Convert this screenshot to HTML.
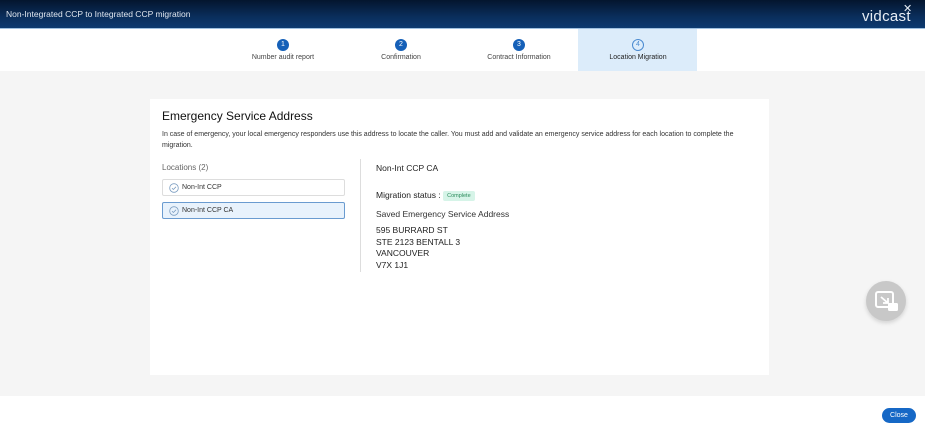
<!DOCTYPE html>
<html><head><style>
*{margin:0;padding:0;box-sizing:border-box}
body{width:925px;height:431px;overflow:hidden;font-family:"Liberation Sans",sans-serif;background:#fff;position:relative;color:#222}
.hdr{position:absolute;left:0;top:0;width:925px;height:28px;background:linear-gradient(180deg,#04152e 0%,#0a2e5c 60%,#0d3a70 100%);}
.hdr .t{position:absolute;left:6px;top:9px;font-size:8.5px;color:#dfe6ee}
.hdr .v{position:absolute;left:862px;top:8px;font-size:15px;color:#e8eef5;letter-spacing:.3px}
.hdr .x{position:absolute;left:903px;top:2px;font-size:11px;color:#e8eef5}
.steps{position:absolute;top:28px;left:0;width:925px;height:43px;background:#fff;border-top:1px solid #9fc0e0}
.act{position:absolute;left:578px;top:0;width:119px;height:43px;background:#dcecfa}
.st{position:absolute;top:10px;width:120px;margin-left:-60px;text-align:center;font-size:7px;color:#444}
.st .c{display:block;margin:0 auto 3px;width:12px;height:12px;border-radius:50%;background:#1560b8;color:#fff;font-size:7px;line-height:12px}
.st .c.o{background:transparent;border:1px solid #4a8ad0;color:#4a8ad0;line-height:10px}
.gray{position:absolute;top:71px;left:0;width:925px;height:325px;background:#f5f5f5}
.card{position:absolute;left:150px;top:99px;width:619px;height:276px;background:#fff}
.h{position:absolute;left:12px;top:10px;font-size:12px;color:#111}
.p{position:absolute;left:12px;top:31px;width:592px;font-size:7px;line-height:10.5px;color:#333}
.lh{position:absolute;left:12px;top:64px;font-size:8px;color:#666}
.li{position:absolute;left:12px;width:183px;height:17px;border:1px solid #ddd;border-radius:2px;font-size:7px;line-height:15px;padding-left:19px;color:#333}
.li.s{border-color:#6a9bd0;background:#e8f2fc}
.li svg{position:absolute;left:6px;top:3px}
.vl{position:absolute;left:210px;top:60px;width:1px;height:113px;background:#ddd}
.r{position:absolute;left:226px;color:#222}
.badge{display:inline-block;background:#d6f4e8;color:#2a8a5a;font-size:5.5px;padding:2px 4px;border-radius:2px;vertical-align:middle}
.fab{position:absolute;left:866px;top:281px;width:40px;height:40px;border-radius:50%;background:#c8c8c8;box-shadow:0 2px 4px rgba(0,0,0,.15)}
.btn{position:absolute;left:882px;top:408px;width:34px;height:15px;border-radius:8px;background:#1668c6;color:#fff;font-size:7px;text-align:center;line-height:15px}
</style></head><body>
<div class="hdr"><div class="t">Non-Integrated CCP to Integrated CCP migration</div><div class="v">vidcast</div><div class="x">✕</div></div>
<div class="steps"><div class="act"></div>
<div class="st" style="left:283px"><span class="c">1</span>Number audit report</div>
<div class="st" style="left:401px"><span class="c">2</span>Confirmation</div>
<div class="st" style="left:519px"><span class="c">3</span>Contract Information</div>
<div class="st" style="left:638px;color:#222"><span class="c o">4</span>Location Migration</div>
</div>
<div class="gray"></div>
<div class="card">
<div class="h">Emergency Service Address</div>
<div class="p">In case of emergency, your local emergency responders use this address to locate the caller. You must add and validate an emergency service address for each location to complete the migration.</div>
<div class="lh">Locations (2)</div>
<div class="li" style="top:80px"><svg width="10" height="10" viewBox="0 0 10 10"><circle cx="5" cy="5" r="4.3" fill="none" stroke="#7a9cc0" stroke-width=".8"/><path d="M3 5.2l1.4 1.3L7 3.8" fill="none" stroke="#7a9cc0" stroke-width=".8"/></svg>Non-Int CCP</div>
<div class="li s" style="top:103px"><svg width="10" height="10" viewBox="0 0 10 10"><circle cx="5" cy="5" r="4.3" fill="none" stroke="#7a9cc0" stroke-width=".8"/><path d="M3 5.2l1.4 1.3L7 3.8" fill="none" stroke="#7a9cc0" stroke-width=".8"/></svg>Non-Int CCP CA</div>
<div class="vl"></div>
<div class="r" style="top:64px;font-size:8.5px">Non-Int CCP CA</div>
<div class="r" style="top:91px;font-size:8.5px">Migration status : <span class="badge">Complete</span></div>
<div class="r" style="top:110px;font-size:8.5px;color:#333">Saved Emergency Service Address</div>
<div class="r" style="top:126px;font-size:8.5px;line-height:11.7px">595 BURRARD ST<br>STE 2123 BENTALL 3<br>VANCOUVER<br>V7X 1J1</div>
</div>
<div class="fab"><svg width="40" height="40" viewBox="0 0 40 40"><rect x="10" y="11" width="17" height="15" rx="2" fill="none" stroke="#fff" stroke-width="2"/><path d="M15 16l7 6M22 17v5h-5" fill="none" stroke="#fff" stroke-width="1.8"/><rect x="22" y="22" width="10" height="8" rx="1.5" fill="#fff"/></svg></div>
<div class="btn">Close</div>
</body></html>
